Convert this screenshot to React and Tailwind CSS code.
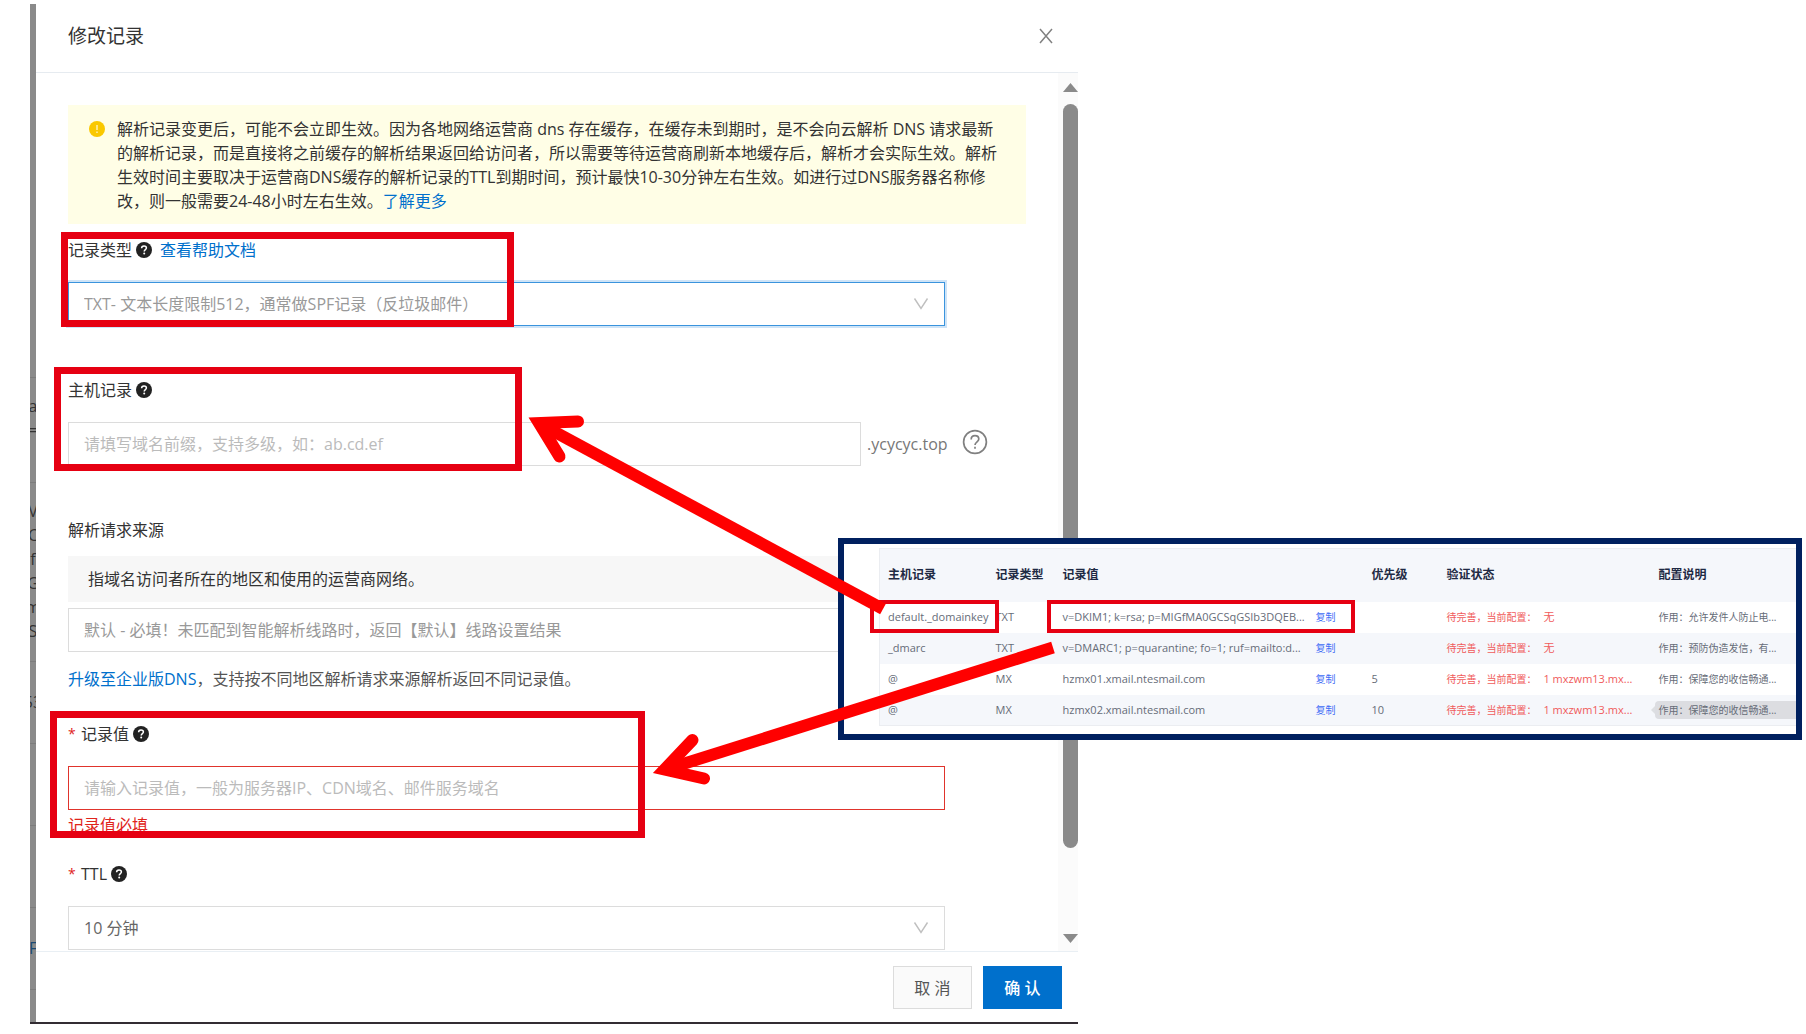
import { useState } from 'react';

const BEHIND = [
  { h: 'h-[374px]', text: [] },
  { h: 'h-[105px]', text: ['a', '='], pad: 'pt-4' },
  { h: 'h-[179px]', text: ['V', 'C', 'f', 'G', 'm', 'S'], pad: 'pt-4' },
  { h: 'h-[82px]', text: ['53'], pad: 'pt-7' },
  { h: 'h-[82px]', text: [] },
  { h: 'h-[82px]', text: [] },
  { h: 'h-[82px]', text: ['F'], pad: 'pt-7', blue: true },
];

const RECORDS = [
  { host: 'default._domainkey', type: 'TXT', value: 'v=DKIM1; k=rsa; p=MIGfMA0GCSqGSIb3DQEB...', priority: '', current: '无', note: '作用：允许发件人防止电...' },
  { host: '_dmarc', type: 'TXT', value: 'v=DMARC1; p=quarantine; fo=1; ruf=mailto:d...', priority: '', current: '无', note: '作用：预防伪造发信，有...' },
  { host: '@', type: 'MX', value: 'hzmx01.xmail.ntesmail.com', priority: '5', current: '1 mxzwm13.mx...', note: '作用：保障您的收信畅通...' },
  { host: '@', type: 'MX', value: 'hzmx02.xmail.ntesmail.com', priority: '10', current: '1 mxzwm13.mx...', note: '作用：保障您的收信畅通...', tip: true },
];

function HelpDot() {
  return (
    <svg viewBox="0 0 16 16" className="ml-1 h-4 w-4 shrink-0" aria-hidden="true">
      <circle cx="8" cy="8" r="8" fill="#222" />
      <path d="M5.6 6.3C5.6 4.9 6.6 4 8 4s2.4.9 2.4 2.1c0 1.5-2.2 1.6-2.2 3.3" fill="none" stroke="#fff" strokeWidth="1.5" />
      <circle cx="8.2" cy="11.6" r="1" fill="#fff" />
    </svg>
  );
}

function Select({ id, tone, focused, children }) {
  return (
    <div className="relative w-full max-w-[877px]">
      <select id={id}
        className={`block h-11 w-full appearance-none border bg-white px-[15px] text-base outline-none ${tone} ${
          focused ? 'border-[#3a94dd] ring-2 ring-[#cfe4f7]' : 'border-[#dcdcdc]'
        }`}>
        <option>{children}</option>
      </select>
      <svg viewBox="0 0 16 12" className="pointer-events-none absolute top-4 right-4 h-3 w-4" fill="none" stroke="#bfbfbf" strokeWidth="1.4">
        <path d="M1.5 0.5 L8 10.5 L14.5 0.5" />
      </svg>
    </div>
  );
}

function Label({ htmlFor, required, help, children }) {
  return (
    <div className="flex h-6 items-center">
      {required && <span className="w-[13px] text-sm text-[#e0241b]">*</span>}
      <label htmlFor={htmlFor}>{children}</label>
      {help && <HelpDot />}
    </div>
  );
}

// Red marker frame laid over a field
function Marker({ className }) {
  return <div className={`pointer-events-none absolute z-10 border-[#e60012] ${className}`} />;
}

function RecordTable() {
  return (
    <div className="absolute top-[538px] right-1 left-[838px] z-20 border-[6px] border-[#00205f] bg-white pt-1 pb-2 pl-[35px]">
      <table className="w-full table-fixed border border-r-0 border-[#ebedf1] text-left text-[11px] whitespace-nowrap text-[#666c78]">
        <colgroup>
          <col className="w-[116px]" />
          <col className="w-[67px]" />
          <col className="w-[253px]" />
          <col className="w-14" />
          <col className="w-[75px]" />
          <col className="w-[212px]" />
          <col />
        </colgroup>
        <thead>
          <tr className="h-[53px] bg-[#f5f7fb] text-xs text-[#1f2a44]">
            <th className="pl-2">主机记录</th>
            <th>记录类型</th>
            <th colSpan={2}>记录值</th>
            <th>优先级</th>
            <th>验证状态</th>
            <th>配置说明</th>
          </tr>
        </thead>
        <tbody className="leading-4">
          {RECORDS.map((r, i) => (
            <tr key={i} className="h-[31px] even:bg-[#f5f7fb]">
              <td className="relative pl-2">
                {r.host}
                {i === 0 && <Marker className="-top-0.5 -left-2.5 h-[33px] w-[129px] border-4" />}
              </td>
              <td>{r.type}</td>
              <td className="relative">
                {r.value}
                {i === 0 && <Marker className="-top-0.5 -left-4 h-[33px] w-[308px] border-4" />}
              </td>
              <td><button className="text-[10px] text-[#3f6df6]">复制</button></td>
              <td>{r.priority}</td>
              <td className="text-[#f05b5b]">
                <span className="mr-1 text-[10px]">待完善，当前配置：</span> {r.current}
              </td>
              <td className="relative text-[10px]">
                {r.tip && (
                  <span className="absolute inset-y-1.5 right-0 -left-1 flex items-center rounded-l bg-black/10">
                    <svg viewBox="0 0 4 8" className="-ml-1 h-2 w-1 shrink-0" fill="#dddfe2"><path d="M4 0v8L0 4z" /></svg>
                  </span>
                )}
                <span className="relative">{r.note}</span>
              </td>
            </tr>
          ))}
        </tbody>
      </table>
    </div>
  );
}

function Arrows() {
  return (
    <svg className="pointer-events-none absolute inset-0 z-30 h-full w-full" fill="none" stroke="#ff0000" strokeWidth="12">
      <path d="M883 609 L541 424.5" />
      <path d="M578 421.5 L539 423 L559.5 456.5" strokeLinecap="round" />
      <path d="M1053 647.5 L667 769" />
      <path d="M692.5 740 L664.5 769.5 L704 778.5" strokeLinecap="round" />
    </svg>
  );
}

export default function App() {
  const [host, setHost] = useState('');
  const [value, setValue] = useState('');

  return (
    <div className="relative min-h-screen bg-white pt-1 pl-[30px] font-['Open_Sans','Noto_Sans_CJK_SC',sans-serif] text-base leading-6 text-[#333]">
      <div className="flex w-[59%] border-b-2 border-[#332c33]">

        {/* Dimmed page behind the drawer */}
        <div className="w-1.5 shrink-0 overflow-hidden bg-[#8a8a8a]" aria-hidden="true">
          {BEHIND.map((b, i) => (
            <div key={i} className={`flex flex-col items-center border-b border-[#7c7c7c] ${b.h} ${b.pad || ''} ${b.blue ? 'text-[#1b4a75]' : ''}`}>
              {b.text.map(t => <span key={t}>{t}</span>)}
            </div>
          ))}
        </div>

        <section className="flex min-w-0 flex-1 flex-col">
          <header className="flex h-[69px] items-center justify-between border-b border-[#e6ebf0] pr-6 pb-1 pl-8">
            <h2 className="text-[19px]">修改记录</h2>
            <button aria-label="关闭">
              <svg viewBox="0 0 16 16" className="h-4 w-4" fill="none" stroke="#808080" strokeWidth="1.5">
                <path d="M2 1 L14 15 M14 1 L2 15" />
              </svg>
            </button>
          </header>

          <div className="flex h-[879px] border-b border-[#e9eff4]">
            <div className="min-w-0 flex-1 overflow-hidden px-8 pt-8">

              <div className="flex bg-[#fffee6] pt-3 pb-[11px] pr-5 pl-[21px]">
                <svg viewBox="0 0 16 16" className="mt-1 mr-3 h-4 w-4 shrink-0">
                  <circle cx="8" cy="8" r="8" fill="#fac800" />
                  <path d="M8 4v5M8 10.5v1.5" stroke="#fff6c9" strokeWidth="1.3" />
                </svg>
                <p>
                  解析记录变更后，可能不会立即生效。因为各地网络运营商 dns 存在缓存，在缓存未到期时，是不会向云解析 DNS 请求最新的解析记录，而是直接将之前缓存的解析结果返回给访问者，所以需要等待运营商刷新本地缓存后，解析才会实际生效。解析生效时间主要取决于运营商DNS缓存的解析记录的TTL到期时间，预计最快10-30分钟左右生效。如进行过DNS服务器名称修改，则一般需要24-48小时左右生效。<a href="#more" className="text-[#0070cc]">了解更多</a>
                </p>
              </div>

              <div className="relative mt-3.5">
                <div className="flex items-center">
                  <Label htmlFor="type" help>记录类型</Label>
                  <a href="#help" className="ml-2 text-[#0070cc]">查看帮助文档</a>
                </div>
                <div className="mt-5">
                  <Select id="type" tone="text-[#999]" focused>TXT- 文本长度限制512，通常做SPF记录（反垃圾邮件）</Select>
                </div>
                <Marker className="-top-1.5 -left-[7px] h-[95px] w-[453px] border-[7px]" />
              </div>

              <div className="relative mt-[52px]">
                <Label htmlFor="host" help>主机记录</Label>
                <div className="mt-5 flex items-center">
                  <input id="host" value={host} onChange={e => setHost(e.target.value)} placeholder="请填写域名前缀，支持多级，如：ab.cd.ef"
                    className="h-11 w-full max-w-[793px] border border-[#dcdcdc] px-[15px] outline-none placeholder:text-[#bbb]" />
                  <span className="ml-1.5 text-[#777]">.ycycyc.top</span>
                  <svg viewBox="0 0 26 26" className="mb-1 ml-3.5 h-[26px] w-[26px] shrink-0" fill="none" stroke="#808080" strokeWidth="1.7">
                    <circle cx="13" cy="13" r="11.4" />
                    <path d="M9.2 10.4c0-2.2 1.6-3.7 3.8-3.7s3.8 1.4 3.8 3.4c0 2.6-3.8 2.9-3.8 6" />
                    <path d="M13 17.8v2" />
                  </svg>
                </div>
                <Marker className="-top-[11px] -left-[14px] h-[104px] w-[468px] border-[7px]" />
              </div>

              <div className="mt-[52px]">
                <Label htmlFor="source">解析请求来源</Label>
                <p className="mt-3.5 mb-1.5 max-w-[877px] bg-[#f7f7f7] px-5 py-[11px]">指域名访问者所在的地区和使用的运营商网络。</p>
                <Select id="source" tone="text-[#999]">默认 - 必填！未匹配到智能解析线路时，返回【默认】线路设置结果</Select>
                <p className="mt-[15px] text-[#555]"><a href="#upgrade" className="text-[#0070cc]">升级至企业版DNS</a>，支持按不同地区解析请求来源解析返回不同记录值。</p>
              </div>

              <div className="relative mt-[31px]">
                <Label htmlFor="value" required help>记录值</Label>
                <input id="value" value={value} onChange={e => setValue(e.target.value)} placeholder="请输入记录值，一般为服务器IP、CDN域名、邮件服务域名"
                  className="mt-5 block h-11 w-full max-w-[877px] border border-[#e0342c] px-[15px] outline-none placeholder:text-[#bbb]" />
                <p className="mt-[3px] text-[#e0241b]">记录值必填</p>
                <Marker className="-top-[11px] -left-[18px] h-[127px] w-[595px] border-[7px]" />
              </div>

              <div className="mt-[25px]">
                <Label htmlFor="ttl" required help>TTL</Label>
                <div className="mt-5">
                  <Select id="ttl" tone="text-[#666]">10 分钟</Select>
                </div>
              </div>
            </div>

            {/* Scrollbar */}
            <div className="flex w-5 shrink-0 flex-col items-end bg-[#fbfbfb] pt-2.5 pb-2" aria-hidden="true">
              <svg viewBox="0 0 15 9" className="h-[9px] w-[15px]" fill="#8a8a8a"><path d="M7.5 0 15 9H0z" /></svg>
              <div className="mt-3 h-[744px] w-[15px] rounded-full bg-[#8a8a8a]" />
              <svg viewBox="0 0 15 9" className="mt-auto h-[9px] w-[15px]" fill="#8a8a8a"><path d="M7.5 9 15 0H0z" /></svg>
            </div>
          </div>

          <footer className="flex h-[70px] justify-end gap-[11px] pt-3.5 pr-4">
            <button className="h-[43px] w-[79px] border border-[#dcdcdc] bg-[#fafafa] text-[#555]">取 消</button>
            <button className="h-[43px] w-[79px] bg-[#0070cc] font-medium text-white">确 认</button>
          </footer>
        </section>
      </div>

      <RecordTable />
      <Arrows />
    </div>
  );
}
